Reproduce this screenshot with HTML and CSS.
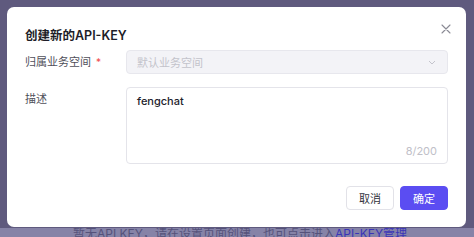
FILE: index.html
```html
<!DOCTYPE html>
<html lang="zh-CN">
<head>
    <meta charset="UTF-8">
    <meta name="viewport" content="width=device-width, initial-scale=1.0">
    <title>创建新的API-KEY</title>
    <link rel="stylesheet" href="styles.css">
</head>
<body>
    <!-- page behind the modal -->
    <div class="page">
        <div class="tip">暂无API KEY，请在设置页面创建，也可点击进入<a href="#">API-KEY管理</a></div>
    </div>

    <!-- modal -->
    <div class="mask">
        <div class="dialog">
            <div class="dialog-header">
                <h3>创建新的API-KEY</h3>
                <button type="button" class="close" aria-label="关闭">
                    <svg width="10" height="10" viewBox="0 0 10 10">
                        <path d="M1 1 L9 9 M9 1 L1 9" stroke="#8a8a94" stroke-width="1.1" stroke-linecap="round" fill="none"/>
                    </svg>
                </button>
            </div>

            <form class="form">
                <div class="form-row">
                    <label>归属业务空间<span class="req">*</span></label>
                    <div class="select">
                        <span class="placeholder">默认业务空间</span>
                        <svg width="8" height="5" viewBox="0 0 8 5">
                            <path d="M1 1 L4 4 L7 1" stroke="#c4c4cc" stroke-width="1" fill="none"/>
                        </svg>
                    </div>
                </div>
                <div class="form-row">
                    <label>描述</label>
                    <div class="textarea">
                        <div class="value">fengchat</div>
                        <span class="count">8/200</span>
                    </div>
                </div>
            </form>

            <div class="dialog-footer">
                <button type="button" class="btn">取消</button>
                <button type="button" class="btn btn-primary">确定</button>
            </div>
        </div>
    </div>
</body>
</html>
```

FILE: styles.css
```css
body {
    margin: 0;
    padding: 0;
    font-family: Inter, "Noto Sans CJK SC", sans-serif;
    color: #333;
    overflow: hidden;
}

.page {
    height: 237px;
    padding-top: 227px;
    box-sizing: border-box;
    background: #8683a7;
}

.tip {
    padding-left: 73px;
    font-size: 12px;
    line-height: 14px;
    color: #55527a;
    white-space: nowrap;
}

.tip a {
    color: #3a34b8;
    text-decoration: none;
}

.mask {
    position: fixed;
    top: 0;
    left: 0;
    right: 0;
    height: 228px;
    background: #5f5a7e;
    padding: 7px 8px 0 7px;
    box-sizing: border-box;
}

.dialog {
    position: relative;
    width: 459px;
    height: 220px;
    box-sizing: border-box;
    background: #fff;
    border-radius: 7px;
    padding: 20px 18px 17px 18px;
}

.dialog-header h3 {
    margin: 0;
    font-size: 12.5px;
    line-height: 18px;
    font-weight: 600;
    color: #1d1d28;
}

.close {
    position: absolute;
    top: 17px;
    right: 15px;
    width: 10px;
    height: 10px;
    padding: 0;
    border: none;
    background: none;
    display: flex;
}

.form {
    margin-top: 5px;
    display: flex;
    flex-direction: column;
    gap: 13px;
}

.form-row {
    display: flex;
    align-items: flex-start;
}

.form-row label {
    width: 101px;
    flex-shrink: 0;
    font-size: 11px;
    line-height: 24px;
    color: #4f4f5a;
}

.req {
    color: #f04a4a;
    margin-left: 5px;
    font-size: 10px;
}

.select {
    flex: 1;
    height: 24px;
    box-sizing: border-box;
    display: flex;
    align-items: center;
    justify-content: space-between;
    padding: 0 11px 0 10px;
    background: #f3f3f7;
    border: 1px solid #e7e7ed;
    border-radius: 4px;
}

.placeholder {
    font-size: 11px;
    color: #c3c3cb;
}

.textarea {
    flex: 1;
    height: 77px;
    box-sizing: border-box;
    display: flex;
    flex-direction: column;
    justify-content: space-between;
    padding: 5px 10px 5px 10px;
    border: 1px solid #e4e4ea;
    border-radius: 4px;
}

.value {
    font-size: 11px;
    line-height: 16px;
    font-weight: 500;
    color: #22222c;
}

.count {
    align-self: flex-end;
    font-size: 11px;
    line-height: 14px;
    color: #c0c0c8;
}

.dialog-footer {
    margin-top: 22px;
    display: flex;
    justify-content: flex-end;
    gap: 6px;
}

.btn {
    width: 48px;
    height: 24px;
    padding: 0;
    font-family: inherit;
    font-size: 11px;
    color: #33333d;
    background: #fff;
    border: 1px solid #e2e2e8;
    border-radius: 4px;
    cursor: pointer;
}

.btn-primary {
    background: #5b4df2;
    border-color: #5b4df2;
    color: #fff;
}
```
